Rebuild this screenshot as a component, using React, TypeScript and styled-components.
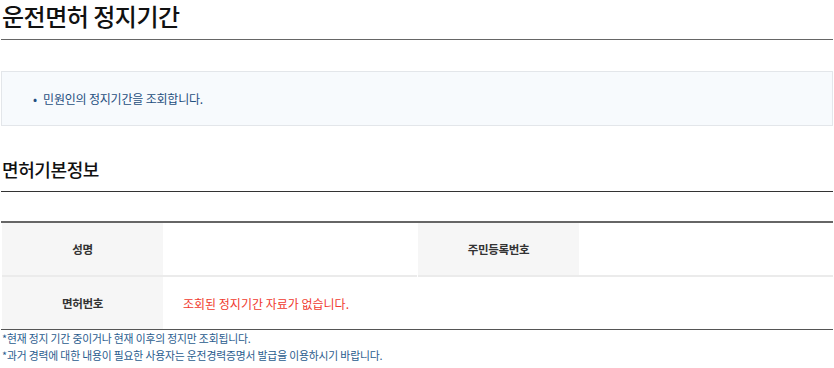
import * as React from "react";
import styled, { createGlobalStyle } from "styled-components";

const GlobalStyle = createGlobalStyle`
  html, body {
    margin: 0;
    padding: 0;
    background: #ffffff;
  }
  body {
    font-family: "Noto Sans CJK KR", "Noto Sans", sans-serif;
    color: #222;
  }
`;

const Page = styled.div`
  width: 832px;
  margin: 0 1px;
`;

const Title = styled.h1`
  margin: 0;
  padding: 1px 0 8px 1px;
  font-size: 24px;
  line-height: 30px;
  font-weight: 500;
  color: #111;
  letter-spacing: -0.5px;
  border-bottom: 1px solid #666;
`;

const InfoBox = styled.div`
  margin-top: 31px;
  height: 53px;
  display: flex;
  align-items: center;
  padding: 0 31px;
  background: #f7fafd;
  border: 1px solid #e3e6ea;
`;

const Bullet = styled.span`
  color: #1f4f80;
  font-size: 12px;
  margin-right: 6px;
`;

const InfoText = styled.span`
  color: #1f4f80;
  font-size: 12px;
  letter-spacing: -0.2px;
`;

const SectionTitle = styled.h2`
  margin: 30px 0 0;
  padding: 0 0 9px 1px;
  font-size: 18px;
  line-height: 26px;
  font-weight: 500;
  color: #111;
  letter-spacing: -0.4px;
  border-bottom: 1px solid #333;
`;

const Table = styled.div`
  margin-top: 29px;
  border-top: 2px solid #666;
  border-bottom: 1px solid #555;
  display: grid;
  grid-template-columns: 162px 254px 162px 1fr;
`;

const Th = styled.div<{ $last?: boolean }>`
  height: 52px;
  margin-left: 1px;
  display: flex;
  align-items: center;
  justify-content: center;
  background: #f6f6f6;
  font-size: 11.5px;
  font-weight: 700;
  color: #333;
  letter-spacing: -0.3px;
  border-bottom: ${(p) => (p.$last ? "none" : "2px solid #ebebeb")};
`;

const Td = styled.div<{ $span?: number; $last?: boolean }>`
  height: 52px;
  grid-column: span ${(p) => p.$span ?? 1};
  display: flex;
  align-items: center;
  padding-left: 20px;
  font-size: 12px;
  color: #333;
  border-bottom: ${(p) => (p.$last ? "none" : "2px solid #ebebeb")};
`;

const Empty = styled.span`
  color: #f03a2e;
`;

const Notes = styled.ul`
  list-style: none;
  margin: 0;
  padding: 0 0 0 1px;
`;

const Note = styled.li`
  font-size: 10.8px;
  line-height: 17px;
  color: #2a5c8e;
  letter-spacing: -0.15px;
`;

const App: React.FC = () => {
  return (
    <Page>
      <GlobalStyle />
      <Title>운전면허 정지기간</Title>
      <InfoBox>
        <Bullet>•</Bullet>
        <InfoText>민원인의 정지기간을 조회합니다.</InfoText>
      </InfoBox>
      <SectionTitle>면허기본정보</SectionTitle>
      <Table>
        <Th>성명</Th>
        <Td />
        <Th>주민등록번호</Th>
        <Td />
        <Th $last>면허번호</Th>
        <Td $span={3} $last>
          <Empty>조회된 정지기간 자료가 없습니다.</Empty>
        </Td>
      </Table>
      <Notes>
        <Note>*현재 정지 기간 중이거나 현재 이후의 정지만 조회됩니다.</Note>
        <Note>*과거 경력에 대한 내용이 필요한 사용자는 운전경력증명서 발급을 이용하시기 바랍니다.</Note>
      </Notes>
    </Page>
  );
};

export default App;
